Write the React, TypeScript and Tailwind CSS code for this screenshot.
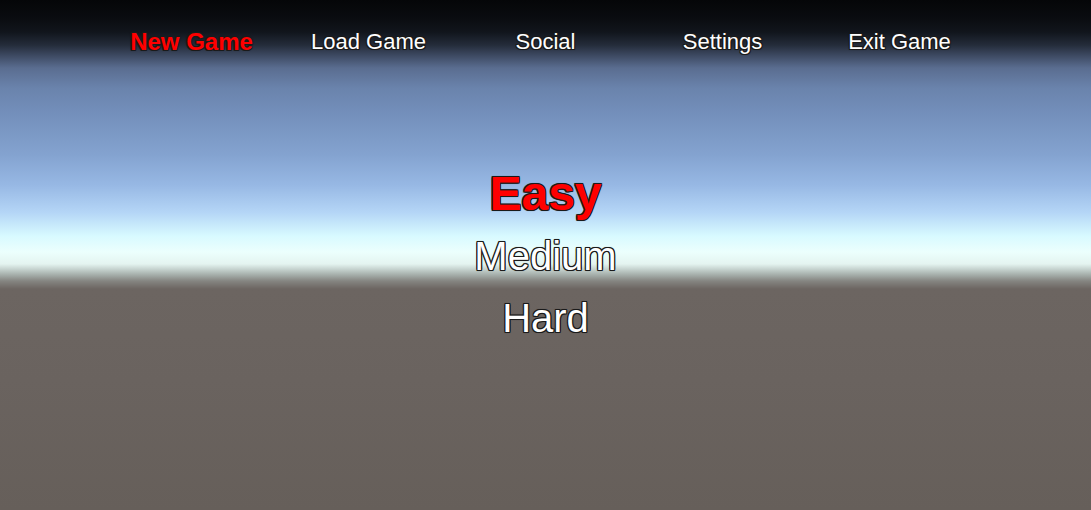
import React, { useState } from "react";

const navItems = ["New Game", "Load Game", "Social", "Settings", "Exit Game"];
const difficulties = ["Easy", "Medium", "Hard"];

// dark rim around the label glyphs, like the in-game UI outline
const outline =
  "[text-shadow:1px_0_0_#1a1a1a,-1px_0_0_#1a1a1a,0_1px_0_#1a1a1a,0_-1px_0_#1a1a1a,1px_1px_0_#1a1a1a,-1px_-1px_0_#1a1a1a,1px_-1px_0_#1a1a1a,-1px_1px_0_#1a1a1a,0_0_2px_#222]";

const App: React.FC = () => {
  const [activeTab, setActiveTab] = useState(0);
  const [difficulty, setDifficulty] = useState(0);

  return (
    <div className="w-[1091px] h-[510px] overflow-hidden font-['Liberation_Sans',Arial,sans-serif] bg-[linear-gradient(to_bottom,#050608_0px,#0a0c10_18px,#11151c_32px,#242c3a_45px,#3c4860_55px,#5a6d90_68px,#6a83ac_88px,#7490bc_115px,#84a3d0_155px,#97b8e4_185px,#b4d5f6_212px,#d8faff_236px,#ecfffd_252px,#e4f4f0_264px,#aab4b0_274px,#858581_281px,#6c6561_289px,#6a635f_380px,#665f5a_510px)]">
      <nav className="flex justify-center pt-[29px]">
        <div className="flex w-[885px]">
          {navItems.map((label, i) => (
            <button
              key={label}
              onClick={() => setActiveTab(i)}
              className={`flex-1 text-center leading-[26px] ${outline} ${
                activeTab === i
                  ? "text-[24px] text-[#ff0000] font-bold"
                  : "text-[22px] text-white"
              }`}
            >
              {label}
            </button>
          ))}
        </div>
      </nav>

      <div className="flex flex-col items-center mt-[108px]">
        {difficulties.map((label, i) => (
          <button
            key={label}
            onClick={() => setDifficulty(i)}
            className={`leading-[62px] ${outline} ${
              difficulty === i
                ? "text-[48px] font-bold text-[#ff0000]"
                : "text-[40px] text-white"
            }`}
          >
            {label}
          </button>
        ))}
      </div>
    </div>
  );
};

export default App;
